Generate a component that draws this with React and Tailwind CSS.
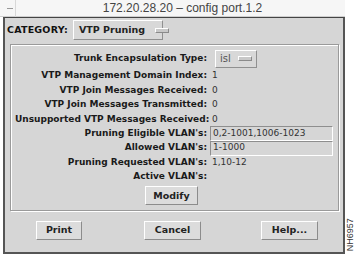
import React from "react";

const rows = [
  { label: "Trunk Encapsulation Type:", kind: "select", value: "isl" },
  { label: "VTP Management Domain Index:", value: "1" },
  { label: "VTP Join Messages Received:", value: "0" },
  { label: "VTP Join Messages Transmitted:", value: "0" },
  { label: "Unsupported VTP Messages Received:", value: "0" },
  { label: "Pruning Eligible VLAN's:", kind: "field", value: "0,2-1001,1006-1023" },
  { label: "Allowed VLAN's:", kind: "field", value: "1-1000" },
  { label: "Pruning Requested VLAN's:", value: "1,10-12" },
  { label: "Active VLAN's:", value: "" },
];

const font = { fontFamily: '"DejaVu Sans", "Liberation Sans", sans-serif' };

const Knob = () => (
  <span className="inline-block shrink-0 w-[14px] h-[5px] bg-[#c8c8c8] border-t border-l border-white border-b border-r border-b-[#8a8a8a] border-r-[#8a8a8a]" />
);

const Button = ({ children, className = "" }) => (
  <div
    className={`flex items-center justify-center h-[19px] bg-[#dcdcdc] border border-t-white border-l-white border-b-[#8c8c8c] border-r-[#8c8c8c] text-[9.5px] font-bold text-[#222] ${className}`}>
    {children}
  </div>
);

export default function App() {
  return (
    <div className="w-[357px] h-[261px] bg-white relative overflow-hidden" style={font}>
      {/* title bar */}
      <div className="w-[345px] h-[17px] bg-[#f6f6f6] border-b border-[#cfcfcf] flex items-center relative">
        <div className="absolute left-[4px] top-0 w-[12px] h-[17px] border-r border-[#d8d8d8] flex items-center justify-center">
          <span className="block w-[6px] h-px bg-[#999]" />
        </div>
        <div
          className="w-full text-center text-[12px] text-[#444] leading-none pl-[20px]"
          style={{ fontFamily: '"Liberation Sans", sans-serif' }}>
          172.20.28.20 – config port.1.2
        </div>
      </div>

      {/* window body */}
      <div className="ml-[3px] w-[342px] h-[237px] bg-[#d6d6d6] border-l-2 border-r-2 border-b-2 border-[#555] border-t border-t-[#444] flex flex-col">
        <div className="flex items-center h-[24px] pl-[2px] gap-[5px]">
          <span className="text-[9.5px] font-bold text-[#111] tracking-[0.2px] whitespace-nowrap">CATEGORY:</span>
          <div className="flex items-center gap-[10px] h-[20px] w-[90px] pl-[5px] bg-[#d8d8d8] border border-t-white border-l-white border-b-[#909090] border-r-[#909090] text-[9.5px] font-bold text-[#222] whitespace-nowrap">
            VTP Pruning
            <Knob />
          </div>
        </div>

        {/* inner panel */}
        <div className="ml-[5px] mr-[4px] mt-[2px] h-[167px] border border-[#9a9a9a] shadow-[inset_1px_1px_0_#fff,1px_1px_0_#fff] px-[4px] pt-[4px] flex flex-col">
          {rows.map((r) => (
            <div
              key={r.label}
              className={`flex items-center ${r.kind === "select" ? "h-[19px] mb-[1px]" : "h-[14.4px]"}`}>
              <div className="w-[195px] text-right text-[9px] font-bold text-[#1a1a1a] pr-[3px] whitespace-nowrap">
                {r.label}
              </div>
              {r.kind === "select" && (
                <div className="flex items-center gap-[7px] h-[18px] px-[4px] ml-[5px] bg-[#d8d8d8] border border-t-white border-l-white border-b-[#909090] border-r-[#909090] text-[10px] text-[#555]">
                  isl
                  <Knob />
                </div>
              )}
              {r.kind === "field" && (
                <div className="flex items-center h-[15px] w-[123px] pl-[2px] bg-[#d6d6d6] border border-t-[#8e8e8e] border-l-[#8e8e8e] border-b-white border-r-white text-[9px] text-[#333]">
                  {r.value}
                </div>
              )}
              {!r.kind && <div className="ml-[2px] text-[9px] text-[#333]">{r.value}</div>}
            </div>
          ))}
          <div className="flex justify-center mt-[2px] pr-[6px]">
            <Button className="w-[53px]">Modify</Button>
          </div>
        </div>

        <div className="flex items-center mt-[10px] h-[19px]">
          <Button className="w-[46px] ml-[31px]">Print</Button>
          <Button className="w-[57px] ml-[62px]">Cancel</Button>
          <Button className="w-[57px] ml-[60px]">Help...</Button>
        </div>
      </div>

      {/* figure id */}
      <div className="absolute left-[345px] top-[214px] w-[12px] h-[42px] flex items-center justify-center">
        <span className="block -rotate-90 text-[9px] text-[#333] whitespace-nowrap" style={{ fontFamily: '"Liberation Sans", sans-serif' }}>
          NH6957
        </span>
      </div>
    </div>
  );
}
